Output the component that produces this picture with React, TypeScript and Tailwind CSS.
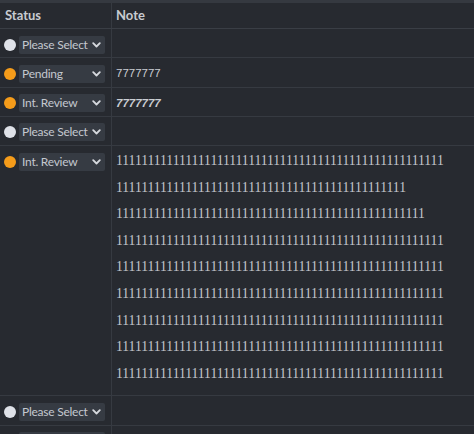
import React from "react";

const ones = (n: number) => "1".repeat(n);

function Chevron() {
  return (
    <svg width="9" height="6" viewBox="0 0 9 6" className="shrink-0">
      <path d="M1.2 1.2 L4.5 4.5 L7.8 1.2" fill="none" stroke="#d6d9de" strokeWidth="1.8" strokeLinecap="round" strokeLinejoin="round" />
    </svg>
  );
}

function StatusCell({ label, color }: { label: string; color: "white" | "orange" }) {
  return (
    <div className="w-[112px] shrink-0 border-r border-[#363a41] pl-[4px] pt-[6.5px]">
      <div className="flex h-[18px] items-center">
        <span
          className={
            color === "orange"
              ? "h-[12px] w-[12px] rounded-full bg-[#f59c1a]"
              : "h-[12px] w-[12px] rounded-full bg-[#dfe2e8]"
          }
        />
        <div className="ml-[3px] flex h-[18px] w-[86px] items-center justify-between rounded-[2px] bg-[#363b43] pl-[3px] pr-[4px] text-[12px] leading-[18px] tracking-[-0.25px] text-[#c4c8cf]">
          <span className="whitespace-nowrap">{label}</span>
          <Chevron />
        </div>
      </div>
    </div>
  );
}

function Row({ label, color, children, last }: { label: string; color: "white" | "orange"; children?: React.ReactNode; last?: boolean }) {
  return (
    <div className={last ? "flex" : "flex border-b border-[#363a41]"}>
      <StatusCell label={label} color={color} />
      <div className="min-h-[28.25px] flex-1 px-[4px] pt-[6px] pb-[4px] text-[#c9ccd2]">{children}</div>
    </div>
  );
}

export default function App() {
  const lines = [52, 46, 49, 52, 52, 52, 52, 52, 52];
  return (
    <div
      className="h-[434px] w-[474px] overflow-hidden bg-[#272a30] text-[13px]"
      style={{ fontFamily: "Lato, 'Noto Sans', sans-serif" }}
    >
      <div className="flex h-[29px] border-t-[3px] border-b border-t-[#353940] border-b-[#3a3e45]">
        <div className="flex w-[112px] shrink-0 items-center border-r border-[#363a41] pl-[5px] text-[13px] font-bold text-[#c8cbd1]">
          Status
        </div>
        <div className="flex flex-1 items-center pl-[4px] text-[13px] font-bold text-[#c8cbd1]">Note</div>
      </div>
      <Row label="Please Select" color="white" />
      <Row label="Pending" color="orange">
        <div className="text-[11.5px] leading-[18px]" style={{ fontFamily: "'Liberation Sans', sans-serif" }}>
          7777777
        </div>
      </Row>
      <Row label="Int. Review" color="orange">
        <div className="text-[11.5px] font-bold italic leading-[18px]" style={{ fontFamily: "'Liberation Sans', sans-serif" }}>
          7777777
        </div>
      </Row>
      <Row label="Please Select" color="white" />
      <Row label="Int. Review" color="orange">
        {lines.map((n, i) => (
          <p
            key={i}
            className="mb-[8.6px] whitespace-nowrap text-[13.6px] leading-[18px] text-[#c3c6cc]"
            style={{ fontFamily: "'Liberation Serif', serif" }}
          >
            {ones(n)}
          </p>
        ))}
      </Row>
      <Row label="Please Select" color="white" />
      <Row label="Please Select" color="white" last />
    </div>
  );
}
